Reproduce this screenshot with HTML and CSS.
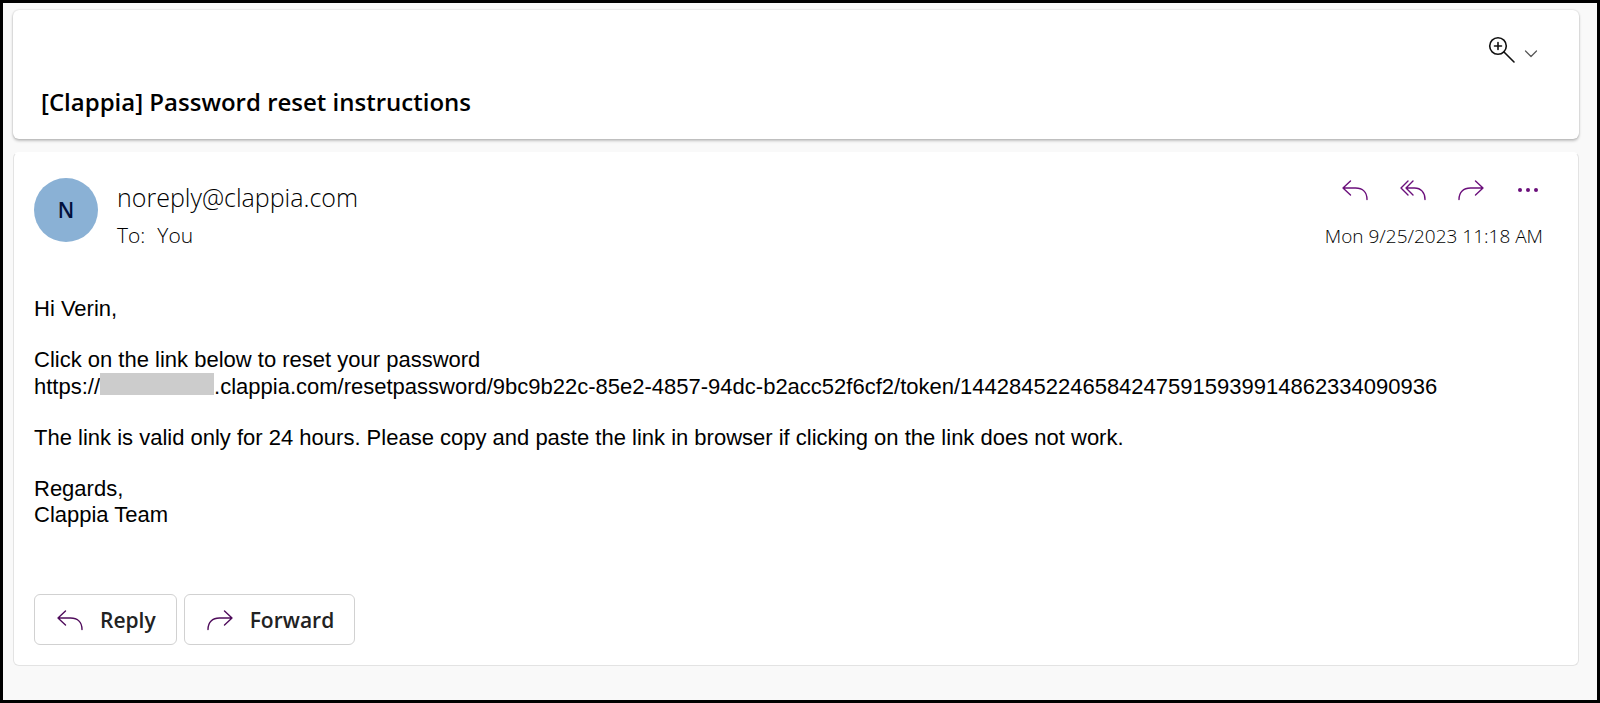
FILE: index.html
```html
<!DOCTYPE html>
<html lang="en">
  <head>
    <meta charset="utf-8">
    <title>[Clappia] Password reset instructions</title>
    <link rel="stylesheet" href="styles.css">
  </head>
  <body>
    <header class="subject-card">
      <button class="icon-button zoom-button" aria-label="Zoom">
        <svg class="zoom-icon" width="28" height="28" viewBox="0 0 28 28">
          <circle cx="10" cy="10" r="8.3" />
          <path d="M10 6.500v7M6.500 10h7M16 16l10 10" />
        </svg>
        <svg class="chevron" width="14" height="14" viewBox="0 0 14 14">
          <path d="M1.500 4L7 9.500l5.500-5.500" />
        </svg>
      </button>
      <h1 class="subject">[Clappia] Password reset instructions</h1>
    </header>

    <main class="message">
      <div class="message-header">
        <div class="avatar">N</div>
        <div class="sender">
          <div class="from">noreply@clappia.com</div>
          <div class="to"><span>To:</span><span>You</span></div>
        </div>
        <div class="meta">
          <div class="actions">
            <button class="icon-button" aria-label="Reply">
              <svg class="icon" width="28" height="24" viewBox="0 0 28 24">
                <path d="M9.500 3L2 10l7.500 7M2 10h12.500c7 0 11.500 4 11.500 11.500" />
              </svg>
            </button>
            <button class="icon-button" aria-label="Reply all">
              <svg class="icon" width="28" height="24" viewBox="0 0 28 24">
                <path d="M9 3L2 10l7 7M14 3L7 10l7 7M7 10h8.500c6.500 0 10.500 4.500 10.500 11.500" />
              </svg>
            </button>
            <button class="icon-button" aria-label="Forward">
              <svg class="icon" width="28" height="24" viewBox="0 0 28 24">
                <path d="M18.500 3L26 10l-7.500 7M26 10H13.500C6.500 10 2 14 2 21.500" />
              </svg>
            </button>
            <button class="icon-button" aria-label="More actions">
              <svg class="dots" width="28" height="24" viewBox="0 0 28 24">
                <circle cx="5" cy="12" r="2" />
                <circle cx="13" cy="12" r="2" />
                <circle cx="21" cy="12" r="2" />
              </svg>
            </button>
          </div>
          <div class="date">Mon 9/25/2023 11:18 AM</div>
        </div>
      </div>

      <div class="message-body">
        <p>Hi Verin,</p>
        <p>Click on the link below to reset your password<br>
        https://<span class="redacted"></span>.clappia.com/resetpassword/9bc9b22c-85e2-4857-94dc-b2acc52f6cf2/token/144284522465842475915939914862334090936</p>
        <p>The link is valid only for 24 hours. Please copy and paste the link in browser if clicking on the link does not work.</p>
        <p>Regards,<br>
        Clappia Team</p>
      </div>

      <div class="reply-bar">
        <button class="reply-button">
          <svg class="icon" width="28" height="24" viewBox="0 0 28 24">
            <path d="M9.500 3L2 10l7.500 7M2 10h12.500c7 0 11.500 4 11.500 11.500" />
          </svg>
          Reply
        </button>
        <button class="reply-button">
          <svg class="icon" width="28" height="24" viewBox="0 0 28 24">
            <path d="M18.500 3L26 10l-7.500 7M26 10H13.500C6.500 10 2 14 2 21.500" />
          </svg>
          Forward
        </button>
      </div>
    </main>
  </body>
</html>
```

FILE: styles.css
```css
* {
  box-sizing: border-box;
}
body {
  margin: 0;
  min-height: 100vh;
  padding: 7px 18px 32px 10px;
  border: 3px solid #000;
  background-color: #f9f9f9;
  color: #000;
  font-family: "Segoe UI", "Open Sans", "Noto Sans", sans-serif;
}
button {
  font-family: inherit;
  cursor: pointer;
}
svg {
  display: block;
  fill: none;
  stroke-linecap: round;
  stroke-linejoin: round;
}
.subject-card {
  display: flex;
  flex-direction: column;
  padding: 24px 41px 20px 28px;
  border-radius: 6px;
  background-color: #fff;
  box-shadow: 0 0 2px rgba(0, 0, 0, 0.2), 0 2px 3px rgba(0, 0, 0, 0.22);
}
.icon-button {
  padding: 0;
  border: none;
  background: none;
}
.zoom-button {
  display: flex;
  align-items: center;
  align-self: flex-end;
  gap: 8px;
  height: 32px;
}
.zoom-icon {
  stroke: #111;
  stroke-width: 1.6;
}
.chevron {
  margin-top: 8px;
  stroke: #555;
  stroke-width: 1.2;
}
.subject {
  margin: 19px 0 0;
  font-size: 24px;
  font-weight: 600;
  line-height: 34px;
}
.message {
  margin-top: 13px;
  padding: 25px 35px 20px 20px;
  border: 1px solid #e3e3e3;
  border-top-color: #fff;
  border-radius: 6px;
  background-color: #fff;
}
.message-header {
  display: flex;
}
.avatar {
  display: flex;
  align-items: center;
  justify-content: center;
  width: 64px;
  height: 64px;
  border-radius: 50%;
  background-color: #8ab1d5;
  color: #02103c;
  font-size: 21px;
  font-weight: 600;
}
.sender {
  margin-left: 19px;
}
.from {
  font-size: 25px;
  font-weight: 300;
  line-height: 38px;
}
.to {
  display: flex;
  gap: 12px;
  font-size: 21px;
  font-weight: 300;
  line-height: 38px;
}
.meta {
  display: flex;
  flex-direction: column;
  align-items: flex-end;
  margin-left: auto;
}
.actions {
  display: flex;
  gap: 30px;
}
.icon {
  stroke: #6b0f7b;
  stroke-width: 1.4;
}
.dots {
  fill: #6b0f7b;
}
.date {
  margin-top: 17px;
  font-size: 19px;
  font-weight: 300;
  line-height: 34px;
}
.message-body {
  margin-top: 42px;
  font-family: Arial, "Liberation Sans", sans-serif;
  font-size: 22px;
  line-height: 26px;
}
.message-body p {
  margin: 0 0 25px;
}
.redacted {
  display: inline-block;
  width: 114px;
  height: 22px;
  background-color: #ccc;
  vertical-align: -1px;
}
.reply-bar {
  display: flex;
  gap: 7px;
  margin-top: 66px;
}
.reply-button {
  display: flex;
  align-items: center;
  gap: 16px;
  height: 51px;
  padding: 0 20px 0 21px;
  border: 1px solid #d1d1d1;
  border-radius: 6px;
  background-color: #fff;
  color: #222;
  font-size: 21px;
  font-weight: 600;
}
.reply-button .icon {
  stroke: #4f0c5b;
}
```
